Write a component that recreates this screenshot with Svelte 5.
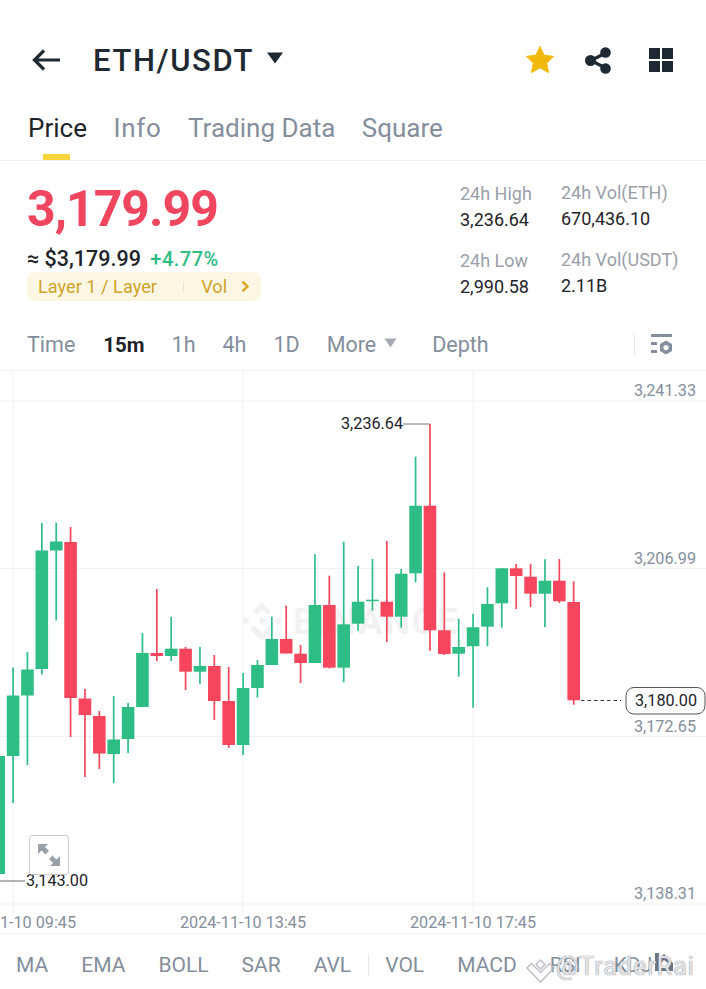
<script>
  const GREEN = "#2ebd85";
  const RED = "#f6465d";

  // top, bottom of body, then wick top and bottom, in page pixels. "g" rose, "r" fell
  const candles = [
    ["g", 756, 874, 756, 881],
    ["g", 695.5, 756, 667.5, 803],
    ["g", 669.5, 695.5, 652, 765],
    ["g", 550.5, 669, 523, 674.5],
    ["g", 541.5, 550.5, 522.5, 620.5],
    ["r", 542, 698, 527, 737],
    ["r", 698.5, 715, 689, 777],
    ["r", 716, 753.5, 711, 769],
    ["g", 739.5, 754, 696, 783],
    ["g", 707, 739, 703, 753],
    ["g", 653, 707, 633, 707],
    ["r", 653, 656, 589, 661],
    ["g", 648.7, 656, 616.7, 661],
    ["r", 648.7, 671.7, 647, 690],
    ["g", 666, 671.7, 647, 684],
    ["r", 666, 701, 655, 720],
    ["r", 701, 745, 667, 748],
    ["g", 688, 745, 673, 755],
    ["g", 665, 688, 660, 697.5],
    ["g", 639, 665, 616.7, 665],
    ["r", 639, 653.5, 605.5, 653.5],
    ["r", 653.7, 663, 645, 683],
    ["g", 605, 663, 554.3, 663],
    ["r", 605, 667.7, 575.7, 668.5],
    ["g", 624.3, 667.7, 541.7, 682.3],
    ["g", 601.7, 623.7, 566, 630.7],
    ["g", 599.7, 601.2, 559, 610.7],
    ["r", 601.7, 616.7, 541, 642],
    ["g", 573.7, 616.7, 569, 627.7],
    ["g", 505.7, 573.3, 456.7, 582.3],
    ["r", 505.7, 630.3, 424, 650.7],
    ["r", 630.3, 654, 572.3, 655],
    ["g", 647, 653.7, 618.7, 676.7],
    ["g", 627.3, 646.3, 613.7, 707.7],
    ["g", 604, 626.7, 587.3, 646.3],
    ["g", 568.3, 603.3, 568, 627.7],
    ["r", 568.3, 576, 564, 609],
    ["r", 576.7, 593.7, 564, 607],
    ["g", 580.7, 593.7, 559.3, 627],
    ["r", 580.7, 601.3, 559, 603],
    ["r", 602, 700.3, 581.3, 704.7],
  ];

  const step = 14.375;
  const x0 = -1.3;
  const bars = candles.map(([dir, top, bottom, high, low], i) => ({
    x: x0 + step * i,
    color: dir === "g" ? GREEN : RED,
    top, bottom, high, low,
  }));

  const hLines = [401, 568.5, 736.5, 904];
  const vLines = [13, 243, 473];
  const priceLabels = [
    ["3,241.33", 390],
    ["3,206.99", 558],
    ["3,172.65", 726],
    ["3,138.31", 893],
  ];
  const timeLabels = [
    ["2024-11-10 09:45", 13],
    ["2024-11-10 13:45", 243],
    ["2024-11-10 17:45", 473],
  ];

  const tabs = ["Info", "Trading Data", "Square"];
  const intervals = ["1h", "4h", "1D"];
  const mainIndicators = ["MA", "EMA", "BOLL", "SAR", "AVL"];
  const subIndicators = ["VOL", "MACD", "RSI", "KDJ"];
</script>

<div class="page">
  <header class="top">
    <svg class="back" width="30" height="24" viewBox="0 0 30 24" fill="none" stroke="#1e2933" stroke-width="3.2">
      <path d="M29 12H4M13 2.5 3.5 12l9.5 9.5" />
    </svg>
    <h1 class="pair">ETH/USDT</h1>
    <svg class="caret" width="18" height="12" viewBox="0 0 18 12"><path d="M1 .5h16L9 11.5z" fill="#1e2933" /></svg>
    <div class="actions">
      <svg width="28" height="28" viewBox="0 0 28 28">
        <path d="M14 .5l4.2 8.7 9.3 1.2-6.800 6.600 1.800 9.500-8.500-4.700-8.500 4.700 1.800-9.500L.5 10.400l9.300-1.200z" fill="#f0b90b" stroke="#f0b90b" stroke-linejoin="round" />
      </svg>
      <svg width="26" height="27" viewBox="0 0 26 27">
        <path d="M20.500 6 6 13.500 20.500 21" fill="none" stroke="#1e2933" stroke-width="3.200" />
        <circle cx="20.500" cy="5.500" r="5.300" fill="#1e2933" />
        <circle cx="5.500" cy="13.500" r="5.500" fill="#1e2933" />
        <circle cx="20.500" cy="21.500" r="5.300" fill="#1e2933" />
      </svg>
      <svg class="grid-icon" width="24" height="24" viewBox="0 0 24 24" fill="#1e2933">
        <rect width="11" height="11" />
        <rect x="13" width="11" height="11" />
        <rect y="13" width="11" height="11" />
        <rect x="13" y="13" width="11" height="11" />
      </svg>
    </div>
  </header>

  <nav class="tabs">
    <div class="tab active">Price</div>
    {#each tabs as tab}
      <div class="tab">{tab}</div>
    {/each}
  </nav>

  <section class="summary">
    <div class="quote">
      <div class="last">3,179.99</div>
      <div class="fiat">≈ $3,179.99 <span class="change">+4.77%</span></div>
      <div class="tag">
        <span class="tag-name">Layer 1 / Layer</span>
        <i class="tag-sep"></i>
        <span>Vol</span>
        <svg width="9" height="13" viewBox="0 0 9 13" fill="none" stroke="#d9a520" stroke-width="2.400"><path d="M1.500 1.500l5 5-5 5" /></svg>
      </div>
    </div>
    <div class="stats">
      <div class="stat">
        <span class="label">24h High</span><span class="value">3,236.64</span>
        <span class="label low">24h Low</span><span class="value">2,990.58</span>
      </div>
      <div class="stat vol">
        <span class="label">24h Vol(ETH)</span><span class="value">670,436.10</span>
        <span class="label low">24h Vol(USDT)</span><span class="value">2.11B</span>
      </div>
    </div>
  </section>

  <div class="intervals">
    <span class="time">Time</span>
    <span class="current">15m</span>
    {#each intervals as item}
      <span>{item}</span>
    {/each}
    <span class="more">More</span>
    <svg class="more-caret" width="13" height="10" viewBox="0 0 13 10"><path d="M.5.5h12L6.500 9.500z" fill="#a4aab3" /></svg>
    <span class="depth">Depth</span>
    <i class="interval-sep"></i>
    <svg width="23" height="23" viewBox="0 0 23 23" fill="#848e9c">
      <rect x="1" y="1" width="21" height="3" />
      <rect x="1" y="9" width="6" height="3" />
      <rect x="1" y="17" width="6" height="3" />
      <path d="M16 7.500l6 3.500v7l-6 3.500-6-3.500v-7zm0 4.500a2.600 2.600 0 1 0 0 5.200 2.600 2.600 0 0 0 0-5.200z" fill-rule="evenodd" />
    </svg>
  </div>

  <div class="chart">
    <svg width="706" height="562" viewBox="0 371 706 562">
      {#each hLines as y}
        <line x1="0" x2="706" y1={y} y2={y} stroke="#f1f1f2" />
      {/each}
      {#each vLines as x}
        <line x1={x} x2={x} y1="371" y2="914" stroke="#f1f1f2" />
      {/each}

      <g fill="#f2f2f3">
        <path d="M262 602l9 9-4 4-5-5-5 5-4-4zM246 617l4 4-4 4-4-4zM278 617l4 4-4 4-4-4zM262 617l4 4-4 4-4-4zM254 625l8 8 8-8 4 4-12 12-12-12z" />
        <text class="mark" x="293" y="634">BINANCE</text>
      </g>

      {#each bars as b}
        <line x1={b.x} x2={b.x} y1={b.high} y2={b.low} stroke={b.color} stroke-width="1.700" />
        <rect x={b.x - 6.3} y={b.top} width="12.600" height={b.bottom - b.top} fill={b.color} />
      {/each}

      {#each priceLabels as [text, y]}
        <text class="axis" x="696" y={y + 5.5} text-anchor="end">{text}</text>
      {/each}
      {#each timeLabels as [text, x]}
        <text class="axis" {x} y="928" text-anchor="middle">{text}</text>
      {/each}

      <text class="extreme" x="341" y="428.500">3,236.64</text>
      <line x1="403" x2="430" y1="424" y2="424" stroke="#777" />
      <line x1="0" x2="25" y1="881" y2="881" stroke="#666" />
      <text class="extreme" x="26" y="886">3,143.00</text>

      <line x1="581" x2="621" y1="700.500" y2="700.500" stroke="#333" stroke-dasharray="3.500 3" />
      <rect x="626" y="687.500" width="79" height="26.500" rx="8" fill="#fff" stroke="#555" />
      <text class="extreme" x="635" y="706">3,180.00</text>
    </svg>

    <button class="expand" aria-label="Expand chart">
      <svg width="24" height="24" viewBox="0 0 24 24" fill="#9aa1ab">
        <path d="M1 1h10L8 4l4 4-3.500 3.500-4-4L1 11zM23 23H13l3-3-4-4 3.500-3.500 4 4L23 13z" />
      </svg>
    </button>
  </div>

  <footer class="indicators">
    {#each mainIndicators as item}
      <span>{item}</span>
    {/each}
    <i class="indicator-sep"></i>
    {#each subIndicators as item}
      <span>{item}</span>
    {/each}
    <svg class="indicator-icon" width="20" height="20" viewBox="0 0 20 20" fill="#6b7480"><path d="M1 1h4v6l5-5 9 9v8H1zm9 7l-5 5v3h10v-4z" fill-rule="evenodd" /></svg>
    <div class="credit">
      <svg width="29" height="24" viewBox="0 0 29 24" fill="none" stroke="#b9bdc4" stroke-width="1.400">
        <path d="M14.500 1 19 5.500 14.500 10 10 5.500zM1 9l4.500-4.500 9 9 9-9L28 9 14.500 23z" />
      </svg>
      <span>@TraderRai</span>
    </div>
  </footer>
</div>

<style>
  :global(body) {
    background: #fff;
    overflow: hidden;
  }

  .page {
    width: 706px;
    height: 989px;
    overflow: hidden;
    font-family: Roboto, "Liberation Sans", sans-serif;
    color: #1e2329;
  }

  .top {
    display: flex;
    align-items: center;
    height: 48px;
    padding: 36px 33px 0 31px;
  }

  .pair {
    margin: 0 0 0 32px;
    font-size: 31px;
    font-weight: 500;
    letter-spacing: 1.6px;
    color: #1e2933;
  }

  .caret {
    margin: -4px 0 0 12px;
  }

  .actions {
    display: flex;
    align-items: center;
    gap: 31px;
    margin-left: auto;
  }

  .grid-icon {
    margin-left: 7px;
  }

  .tabs {
    display: flex;
    gap: 26.500px;
    height: 77px;
    padding-left: 28px;
    border-bottom: 1px solid #eeeff1;
    box-sizing: border-box;
    font-size: 26px;
    color: #848e9c;
    line-height: 88px;
  }

  .tab:nth-child(2) {
    letter-spacing: 0.7px;
  }

  .tab.active {
    position: relative;
    color: #1e2329;
  }

  .tab.active::after {
    content: "";
    position: absolute;
    left: 15px;
    bottom: 0;
    width: 27px;
    height: 6px;
    background: #f8d33a;
  }

  .summary {
    display: flex;
    justify-content: space-between;
    height: 161px;
    padding: 0 27px;
    box-sizing: border-box;
  }

  .last {
    margin-top: 18px;
    height: 60px;
    font-size: 50px;
    line-height: 60px;
    font-weight: 700;
    letter-spacing: -1px;
    color: #f0465f;
  }

  .fiat {
    margin-top: 6px;
    height: 28px;
    font-size: 21.500px;
    line-height: 28px;
    font-weight: 500;
  }

  .change {
    margin-left: 4px;
    font-size: 20px;
    letter-spacing: 0.5px;
    color: #2ebd85;
  }

  .tag {
    display: flex;
    align-items: center;
    margin-top: -1px;
    width: 234px;
    height: 29px;
    box-sizing: border-box;
    padding: 0 11px;
    border-radius: 8px;
    background: #fdf6e3;
    font-size: 18.200px;
    color: #d0a42a;
  }

  .tag-name {
    width: 147px;
  }

  .tag-sep {
    width: 1px;
    height: 9px;
    margin-right: 17px;
    background: #ece4cd;
  }

  .tag svg {
    margin-left: 14px;
  }

  .stats {
    display: flex;
    gap: 29px;
    margin-top: 20px;
  }

  .stat {
    display: flex;
    flex-direction: column;
    width: 72px;
    font-size: 18px;
  }

  .stat.vol {
    width: 118px;
    margin-top: -1px;
  }

  .label {
    line-height: 26px;
    color: #9aa0aa;
  }

  .label.low {
    margin-top: 15px;
  }

  .value {
    line-height: 26px;
    color: #1e2329;
  }

  .intervals {
    display: flex;
    align-items: center;
    gap: 27px;
    height: 45px;
    padding: 0 33px 0 27px;
    font-size: 21.500px;
    color: #848e9c;
  }

  .time {
    margin-right: 1px;
  }

  .current {
    font-size: 20.500px;
    font-weight: 700;
    color: #1e2329;
  }

  .more-caret {
    margin-left: -19px;
    margin-top: -4px;
  }

  .depth {
    margin-left: 8px;
  }

  .interval-sep {
    width: 1px;
    height: 22px;
    margin-left: auto;
    margin-right: -12px;
    background: #e6e8ea;
  }

  .chart {
    position: relative;
    height: 563px;
    margin-top: 3px;
    border-top: 1px solid #f0f0f1;
    box-sizing: border-box;
  }

  .chart > svg {
    display: block;
  }

  .axis {
    font-size: 16.200px;
    fill: #848e9c;
  }

  .extreme {
    font-size: 16.200px;
    fill: #1e2329;
  }

  .mark {
    font-size: 36px;
    font-weight: 700;
    letter-spacing: 2px;
  }

  .expand {
    position: absolute;
    left: 29px;
    top: 464px;
    display: flex;
    align-items: center;
    justify-content: center;
    width: 40px;
    height: 40px;
    padding: 0;
    border: 1px solid #c9ccd1;
    border-radius: 3px;
    background: #fff;
  }

  .indicators {
    position: relative;
    display: flex;
    align-items: center;
    gap: 33px;
    height: 56px;
    padding: 6px 0 0 16px;
    border-top: 1px solid #f0f0f1;
    box-sizing: border-box;
    font-size: 21px;
    color: #848e9c;
  }

  .indicator-sep {
    width: 1px;
    height: 22px;
    margin: 0 -16.500px;
    background: #e6e8ea;
  }

  .indicator-icon {
    margin: -6px 0 0 -31px;
  }

  .credit {
    position: absolute;
    left: 526px;
    top: 16px;
    display: flex;
    align-items: center;
    gap: 1px;
    font-size: 25px;
    letter-spacing: 1px;
    color: rgba(255, 255, 255, 0.75);
    text-shadow: 0 0 1px #8b909a, 0 0 1px #8b909a;
  }

  .credit svg {
    margin-top: 9px;
  }
</style>
